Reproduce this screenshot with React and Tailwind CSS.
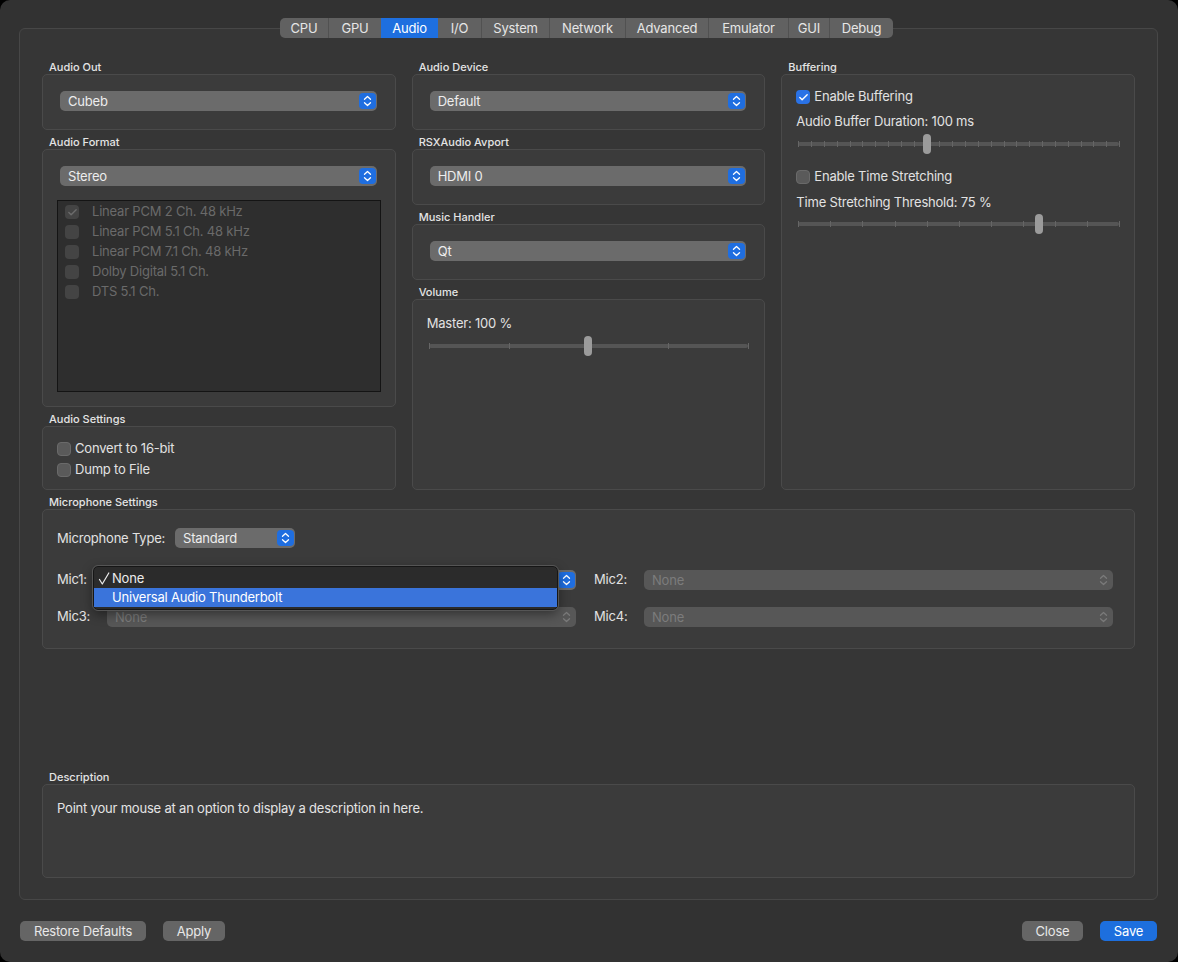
import { Check } from "lucide-react";

const tabs = [
  { name: "CPU", w: "w-[48px]" },
  { name: "GPU", w: "w-[53px]" },
  { name: "Audio", w: "w-[57px]", active: true },
  { name: "I/O", w: "w-[43px]" },
  { name: "System", w: "w-[68px]" },
  { name: "Network", w: "w-[76px]" },
  { name: "Advanced", w: "w-[83px]" },
  { name: "Emulator", w: "w-[80px]" },
  { name: "GUI", w: "w-[41px]" },
  { name: "Debug", w: "w-[64px]" },
];

const formats = [
  { label: "Linear PCM 2 Ch. 48 kHz", checked: true },
  { label: "Linear PCM 5.1 Ch. 48 kHz" },
  { label: "Linear PCM 7.1 Ch. 48 kHz" },
  { label: "Dolby Digital 5.1 Ch." },
  { label: "DTS 5.1 Ch." },
];

// up/down arrows at the right end of a popup button
const Stepper = ({ disabled }) => (
  <div
    className={`flex h-4 w-[17px] items-center justify-center rounded-[4px] ${
      disabled ? "" : "bg-[#1f6ee0]"
    }`}
  >
    <svg width="17" height="16" viewBox="0 0 17 16" fill="none">
      <path
        d="M5.5 6.2L8.5 3.4L11.5 6.2M5.5 9.8L8.5 12.6L11.5 9.8"
        stroke={disabled ? "#7a7a7a" : "#ffffff"}
        strokeWidth="1.3"
        strokeLinecap="round"
        strokeLinejoin="round"
      />
    </svg>
  </div>
);

const Select = ({ value, disabled, className = "" }) => (
  <div
    className={`flex h-5 items-center rounded-[5px] pl-2 pr-px ${
      disabled ? "bg-[#575757] text-[#7c7c7c]" : "bg-[#6b6b6b] text-[#ededed]"
    } ${className}`}
  >
    <span className="flex-1 truncate leading-5">{value}</span>
    <Stepper disabled={disabled} />
  </div>
);

const Checkbox = ({ checked, disabled, label, rowH = "h-[18px]", gap = "ml-1", className = "" }) => (
  <div className={`flex items-center ${rowH} ${className}`}>
    <div
      className={`flex h-[14px] w-[14px] items-center justify-center rounded-[4px] ${
        checked && !disabled
          ? "bg-[#2a72e6]"
          : disabled
          ? "bg-[#444444]"
          : "border border-[#6a6a6a] bg-[#5a5a5a]"
      }`}
    >
      {checked && (
        <Check
          size={11}
          strokeWidth={3}
          className={disabled ? "text-[#6c6c6c]" : "text-white"}
        />
      )}
    </div>
    <span className={`${gap} ${disabled ? "text-[#6a6a6a]" : "text-[#e2e2e2]"}`}>{label}</span>
  </div>
);

const Slider = ({ ticks, value }) => (
  <div className="relative h-5">
    <div className="absolute left-0 right-0 top-[8px] h-[4px] rounded-full bg-[#555555]" />
    {Array.from({ length: ticks }).map((_, i) => (
      <div
        key={i}
        className="absolute top-[7px] h-[6px] w-px bg-[#656565]"
        style={{ left: `${(i / (ticks - 1)) * 100}%` }}
      />
    ))}
    <div
      className="absolute top-0 h-5 w-2 -translate-x-1/2 rounded-full bg-[#9b9b9b]"
      style={{ left: `${value * 100}%` }}
    />
  </div>
);

const Group = ({ title, className = "", bodyClass = "", children }) => (
  <div className={`flex flex-col ${className}`}>
    <div className="h-[13px] pl-[7px] text-[11px] font-medium leading-[13px] tracking-normal text-[#e4e4e4]">
      {title}
    </div>
    <div className={`rounded-[5px] border border-[#4a4a4a] bg-[#3b3b3b] ${bodyClass}`}>
      {children}
    </div>
  </div>
);

const Button = ({ children, primary, className = "" }) => (
  <button
    className={`h-5 rounded-[5px] text-[13px] leading-5 ${
      primary ? "bg-[#1d6fde] text-white" : "bg-[#656565] text-[#e8e8e8]"
    } ${className}`}
  >
    {children}
  </button>
);

export default function App() {
  return (
    <div className="h-[962px] w-full bg-black font-['Inter','Noto_Sans',sans-serif] text-[13px] tracking-[-0.2px] text-[#e2e2e2]">
      <div className="flex h-full flex-col rounded-[10px] bg-[#323232]">
        {/* TAB PANE */}
        <div className="relative ml-[19px] mr-[20px] mt-[28px] flex h-[872px] flex-col rounded-[6px] border border-[#474747] bg-[#363636] px-[22px] pb-[21px] pt-[32px]">
          <div className="absolute left-[260px] top-[-11px] flex h-5 overflow-hidden rounded-[5px] bg-[#616161]">
            {tabs.map((t, i) => (
              <div
                key={t.name}
                className={`flex h-5 items-center justify-center leading-5 ${t.w} ${
                  t.active ? "bg-[#1e6fdf] text-white" : "text-[#e6e6e6]"
                } ${i > 0 && !t.active && !tabs[i - 1].active ? "border-l border-[#515151]" : ""}`}
              >
                {t.name}
              </div>
            ))}
          </div>

          {/* THREE COLUMNS */}
          <div className="grid grid-cols-3 gap-x-4">
            <div className="flex flex-col gap-[6px]">
              <Group title="Audio Out" bodyClass="h-[56px] pl-[17px] pr-[18px] pt-4">
                <Select value="Cubeb" />
              </Group>
              <Group title="Audio Format" bodyClass="h-[258px] px-[14px] pt-4">
                <Select value="Stereo" className="ml-[3px] mr-[4px]" />
                <div className="mt-[14px] h-[192px] border border-[#141414] bg-[#2e2e2e] pl-[7px] pt-[1px]">
                  {formats.map((f) => (
                    <Checkbox
                      key={f.label}
                      label={f.label}
                      checked={f.checked}
                      disabled
                      rowH="h-5"
                      gap="ml-[13px]"
                    />
                  ))}
                </div>
              </Group>
              <Group title="Audio Settings" bodyClass="h-[64px] pl-[14px] pt-[13px]">
                <Checkbox label="Convert to 16-bit" />
                <Checkbox label="Dump to File" className="mt-[3px]" />
              </Group>
            </div>

            <div className="flex flex-col gap-[6px]">
              <Group title="Audio Device" bodyClass="h-[56px] pl-[17px] pr-[18px] pt-4">
                <Select value="Default" />
              </Group>
              <Group title="RSXAudio Avport" bodyClass="h-[56px] pl-[17px] pr-[18px] pt-4">
                <Select value="HDMI 0" />
              </Group>
              <Group title="Music Handler" bodyClass="h-[56px] pl-[17px] pr-[18px] pt-4">
                <Select value="Qt" />
              </Group>
              <Group title="Volume" className="flex-1" bodyClass="flex-1 pl-[14px] pr-4 pt-[14px]">
                <div className="h-[18px] leading-[18px]">Master: 100 %</div>
                <div className="ml-[2px] mt-[4px]">
                  <Slider ticks={5} value={0.5} />
                </div>
              </Group>
            </div>

            <div className="flex flex-col">
              <Group title="Buffering" className="flex-1" bodyClass="flex-1 pl-[14px] pr-[15px] pt-[13px]">
                <Checkbox label="Enable Buffering" checked />
                <div className="mt-[6px] h-[18px] leading-[18px]">Audio Buffer Duration: 100 ms</div>
                <div className="ml-[2px] mt-[4px]">
                  <Slider ticks={26} value={0.4} />
                </div>
                <Checkbox label="Enable Time Stretching" className="mt-[14px]" />
                <div className="mt-[7px] h-[18px] leading-[18px]">Time Stretching Threshold: 75 %</div>
                <div className="ml-[2px] mt-[3px]">
                  <Slider ticks={11} value={0.75} />
                </div>
              </Group>
            </div>
          </div>

          {/* MICROPHONE */}
          <Group title="Microphone Settings" className="mt-[6px]" bodyClass="h-[140px] pl-[14px] pt-[18px]">
            <div className="flex h-5 items-center">
              <span className="w-[118px] pt-px">Microphone Type:</span>
              <Select value="Standard" className="w-[120px]" />
            </div>
            <div className="mt-[22px] flex h-5 items-center">
              <span className="w-[50px]">Mic1:</span>
              <div className="relative w-[469px]">
                <Select value="" />
                <div className="absolute left-[-14px] top-[-4px] w-[465px] rounded-[5px] border border-[#161616] bg-[#2b2b2b] pb-[2px] pt-[2px] shadow-[0_4px_12px_rgba(0,0,0,0.45)] outline outline-[#555555]">
                  <div className="flex h-[19px] items-center text-[#ececec]">
                    <span className="flex w-[18px] justify-center pl-[1px]">
                      <svg width="12" height="13" viewBox="0 0 12 13" fill="none">
                        <path d="M1.5 7.5L4.3 12L10.8 1" stroke="#ececec" strokeWidth="1.2" strokeLinecap="round" strokeLinejoin="round" />
                      </svg>
                    </span>
                    <span>None</span>
                  </div>
                  <div className="flex h-[19px] items-center bg-[#3a74db] pl-[18px] text-white">
                    Universal Audio Thunderbolt
                  </div>
                </div>
              </div>
              <span className="ml-[18px] w-[50px]">Mic2:</span>
              <Select value="None" disabled className="w-[469px]" />
            </div>
            <div className="mt-[17px] flex h-5 items-center">
              <span className="w-[50px]">Mic3:</span>
              <Select value="None" disabled className="w-[469px]" />
              <span className="ml-[18px] w-[50px]">Mic4:</span>
              <Select value="None" disabled className="w-[469px]" />
            </div>
          </Group>

          {/* DESCRIPTION */}
          <Group title="Description" className="mt-auto" bodyClass="h-[94px] pl-[14px] pt-[14px]">
            <div className="h-[18px] leading-[18px] text-[#e4e4e4]">
              Point your mouse at an option to display a description in here.
            </div>
          </Group>
        </div>

        {/* BUTTONS */}
        <div className="mt-[21px] flex pl-5 pr-[21px]">
          <Button className="w-[126px]">Restore Defaults</Button>
          <Button className="ml-[17px] w-[62px]">Apply</Button>
          <Button className="ml-auto w-[61px]">Close</Button>
          <Button primary className="ml-[17px] w-[57px]">
            Save
          </Button>
        </div>
      </div>
    </div>
  );
}
